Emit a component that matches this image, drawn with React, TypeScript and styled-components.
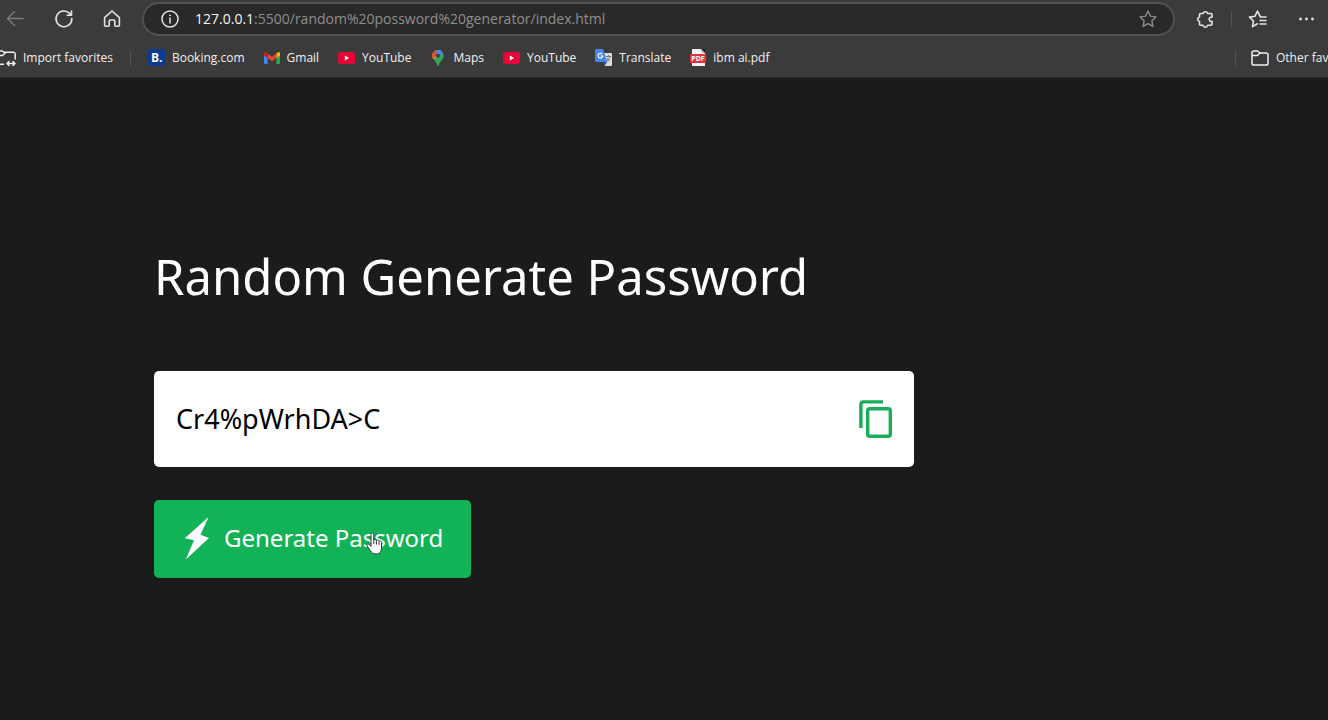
import React, { useState } from "react";
import styled, { createGlobalStyle } from "styled-components";

const GlobalStyle = createGlobalStyle`
  * { box-sizing: border-box; }
  body {
    margin: 0;
    background: #1b1b1b;
    color: #fff;
    font-family: "Noto Sans", "Open Sans", sans-serif;
  }
  button, input { font: inherit; }
`;

const Browser = styled.div`
  min-height: 100vh;
  display: flex;
  flex-direction: column;
  overflow: hidden;
`;

const Chrome = styled.header`
  background: #3b3b3b;
  border-bottom: 1px solid #282828;
`;

const Toolbar = styled.div`
  display: flex;
  align-items: center;
  height: 38px;
  padding-right: 10px;
`;

const NavGroup = styled.nav`
  display: flex;
  align-items: center;
  gap: 24px;
  padding: 0 18px 0 4px;
`;

const IconButton = styled.button<{ $color?: string }>`
  display: grid;
  place-items: center;
  width: 24px;
  height: 24px;
  padding: 0;
  border: 0;
  background: none;
  color: ${(p) => p.$color ?? "#e4e4e4"};
`;

const AddressBar = styled.div`
  flex: 1;
  display: flex;
  align-items: center;
  height: 34px;
  padding: 0 13px 0 16px;
  border: 2px solid #505050;
  border-radius: 17px;
  background: #292929;
`;

const Address = styled.p`
  flex: 1;
  margin: 0 0 0 15px;
  font-family: "Open Sans", sans-serif;
  font-size: 14px;
  line-height: 20px;
  color: #8f8f8f;
  white-space: nowrap;
`;

const Host = styled.span`
  font-weight: 500;
  color: #f5f5f5;
`;

const Divider = styled.span`
  flex: none;
  width: 1px;
  height: 16px;
  background: #525252;
`;

const ToolGroup = styled.div`
  display: flex;
  align-items: center;
  gap: 24px;
  padding-left: 18px;

  ${Divider} { margin: 0 -10px; }
`;

const BookmarkBar = styled.div`
  display: flex;
  align-items: center;
  height: 39px;
`;

const BookmarkList = styled.nav`
  flex: 1;
  display: flex;
  align-items: center;
  gap: 19px;

  ${Divider} { margin: 0 -2px; }
`;

const Bookmark = styled.a`
  display: flex;
  align-items: center;
  gap: 7px;
  font-family: "Open Sans", sans-serif;
  font-size: 12px;
  font-weight: 500;
  line-height: 20px;
  color: #f0f0f0;
  text-decoration: none;
  white-space: nowrap;

  svg { flex: none; }
`;

const OtherBookmarks = styled.div`
  display: flex;
  align-items: center;
  gap: 15px;
  width: 93px;
`;

const Page = styled.main`
  width: 100%;
  max-width: 1068px;
  padding: 166px 154px 40px;
`;

const Title = styled.h1`
  margin: 0;
  font-size: 49px;
  font-weight: 400;
  line-height: 64px;
  white-space: nowrap;
`;

const Field = styled.div`
  display: flex;
  align-items: center;
  height: 96px;
  margin-top: 63px;
  padding: 0 22px;
  border-radius: 5px;
  background: #fff;
`;

const PasswordInput = styled.input`
  flex: 1;
  min-width: 0;
  padding: 0;
  border: 0;
  outline: 0;
  background: none;
  color: #000;
  font-size: 27px;
  line-height: 36px;
`;

const CopyButton = styled.button`
  display: block;
  padding: 0;
  border: 0;
  background: none;
  color: #16ae5a;

  svg { display: block; }
`;

const GenerateButton = styled.button`
  position: relative;
  display: flex;
  align-items: center;
  gap: 14px;
  height: 78px;
  margin-top: 33px;
  padding: 0 28px 2px 30px;
  border: 0;
  border-radius: 5px;
  background: #12b357;
  color: #fff;
  font-size: 24px;
  line-height: 36px;
  white-space: nowrap;
`;

const Pointer = styled.svg`
  position: absolute;
  left: 211px;
  top: 32px;
`;

const line = {
  fill: "none",
  stroke: "currentColor",
  strokeWidth: 1.4,
  strokeLinecap: "round" as const,
  strokeLinejoin: "round" as const,
};

const BackIcon = () => (
  <svg width="20" height="20" viewBox="0 0 20 20" {...line}>
    <path d="M17 9.500H2M8.500 2.500 1.500 9.500l7 7" />
  </svg>
);

const ReloadIcon = () => (
  <svg width="20" height="20" viewBox="0 0 20 20" {...line} strokeWidth={1.6}>
    <path d="M17.800 9.500a7.900 7.900 0 1 1-2.200-5.100l1.700 1.800M17.500 2v4.300h-4.300" />
  </svg>
);

const HomeIcon = () => (
  <svg width="20" height="20" viewBox="0 0 20 20" {...line} strokeWidth={1.6}>
    <path d="M2.600 8.700 10 2l7.400 6.700V16a1.300 1.300 0 0 1-1.300 1.300h-2.300a1 1 0 0 1-1-1V12a1 1 0 0 0-1-1H8.200a1 1 0 0 0-1 1v4.300a1 1 0 0 1-1 1H3.900A1.300 1.300 0 0 1 2.600 16z" />
  </svg>
);

const InfoIcon = () => (
  <svg width="20" height="20" viewBox="0 0 20 20" {...line} stroke="#e4e4e4" strokeWidth={1.5}>
    <circle cx="10" cy="10" r="8" />
    <path d="M10 9v5" />
    <circle cx="10" cy="6.300" r=".5" fill="#e4e4e4" strokeWidth={0.8} />
  </svg>
);

const StarIcon = () => (
  <svg width="20" height="20" viewBox="0 0 20 20" {...line}>
    <path d="m10 2 2.400 5.100 5.500.8-4 3.900 1 5.600-4.900-2.700-4.900 2.700 1-5.600-4-3.900 5.500-.8z" />
  </svg>
);

const PuzzleIcon = () => (
  <svg width="20" height="20" viewBox="0 0 20 20" {...line} strokeWidth={1.6}>
    <path d="M5.500 4.500h2.600a2.300 2.300 0 0 1 4.500 0h3.400a1 1 0 0 1 1 1V8.200a2.200 2.200 0 1 0 0 4.200v2.900a1 1 0 0 1-1 1h-3.400a2.300 2.300 0 0 1-4.500 0H5.500a1 1 0 0 1-1-1v-2.800a2.300 2.300 0 0 1 0-4.500V5.500a1 1 0 0 1 1-1z" />
  </svg>
);

const FavoritesIcon = () => (
  <svg width="20" height="20" viewBox="0 0 20 20" {...line} strokeWidth={1.6}>
    <path d="M18 8h-5.500L9.400 2.200 6.900 7.300l-5.400.8 4 3.900-1 5.600 4.900-2.800M12 11.500h6M12 15h6" />
  </svg>
);

const MoreIcon = () => (
  <svg width="20" height="20" viewBox="0 0 20 20" fill="currentColor">
    <circle cx="4.500" cy="10" r="1.400" />
    <circle cx="10.500" cy="10" r="1.400" />
    <circle cx="16.500" cy="10" r="1.400" />
  </svg>
);

const ImportIcon = () => (
  <svg width="16" height="18" viewBox="4 0 16 18" {...line} strokeWidth={1.5}>
    <path d="M0 4.500V2h6.500L9 4.300 6.500 6.500H0M9 3.300h8.500A1.800 1.800 0 0 1 19.200 5v5M0 15.300h7.500M11 14.500h8M13 12.500l-2 2 2 2M17 12.500l2 2-2 2" />
  </svg>
);

const FolderIcon = () => (
  <svg width="18" height="18" viewBox="0 0 18 18" {...line} strokeWidth={1.5}>
    <path d="M1 4a2 2 0 0 1 2-2h3.600L9 4h6.200A1.800 1.800 0 0 1 17 5.800v8.400a1.800 1.800 0 0 1-1.800 1.800H2.800A1.800 1.800 0 0 1 1 14.200zM1 6.500h5.500L9 4" />
  </svg>
);

const BookingIcon = () => (
  <svg width="17" height="17" viewBox="0 0 17 17">
    <rect width="17" height="17" rx="2" fill="#0b3a8f" />
    <text x="3" y="13" fill="#fff" fontFamily="Open Sans, sans-serif" fontWeight="700" fontSize="12">B.</text>
  </svg>
);

const GmailIcon = () => (
  <svg width="16" height="16" viewBox="0 0 16 16">
    <path fill="#4285f4" d="M0 4.500 3.600 7v7H1.200A1.200 1.200 0 0 1 0 12.800z" />
    <path fill="#34a853" d="M12.400 7 16 4.500v8.300a1.200 1.200 0 0 1-1.200 1.200h-2.400z" />
    <path fill="#fbbc04" d="M12.400 3.500 14 2.300c1-.7 2 0 2 1.200v2L12.400 8z" />
    <path fill="#ea4335" d="M3.600 3.600 8 6.800l4.400-3.200V8L8 11.200 3.600 8z" />
    <path fill="#c5221f" d="M0 3.500c0-1.200 1-1.900 2-1.200l1.600 1.300V8L0 5.500z" />
  </svg>
);

const YouTubeIcon = () => (
  <svg width="17" height="16" viewBox="0 0 17 16">
    <rect y="2" width="17" height="12" rx="3" fill="#e80536" />
    <path d="m6.800 5.500 4.400 2.500-4.400 2.500z" fill="#fff" />
  </svg>
);

const MapsIcon = () => (
  <svg width="16" height="16" viewBox="0 0 14 16">
    <defs>
      <clipPath id="pin">
        <path d="M7 0a5.700 5.700 0 0 1 5.700 5.700c0 3.700-3.900 5-4.900 9.500-.2 1-1.400 1-1.600 0-1-4.500-4.900-5.800-4.900-9.500A5.700 5.700 0 0 1 7 0z" />
      </clipPath>
    </defs>
    <g clipPath="url(#pin)">
      <path fill="#34a853" d="M0 0h14v16H0z" />
      <path fill="#fbbc04" d="M0 12 12 0H0z" />
      <path fill="#4285f4" d="M4 0h10v2L7 8z" />
      <path fill="#ea4335" d="M0 0h3.500L7 4 2 9 0 7z" />
    </g>
    <circle cx="7" cy="5.700" r="2" fill="#3b3b3b" />
  </svg>
);

const TranslateIcon = () => (
  <svg width="17" height="17" viewBox="0 0 17 17">
    <path fill="#dcdcdc" d="M7 4h8.800A1.200 1.200 0 0 1 17 5.200v10.600a1.200 1.200 0 0 1-1.200 1.200H10z" />
    <path fill="#4b83e8" d="M1.200 0h7l4 13H1.200A1.200 1.200 0 0 1 0 11.800V1.200A1.200 1.200 0 0 1 1.200 0z" />
    <path fill="#2a56b8" d="M8.700 13h3.500L10 16.500z" />
    <path fill="none" stroke="#fff" strokeWidth="1.200" d="M7.200 5.100a2.400 2.400 0 1 0 .6 1.900H5.500" />
    <path fill="none" stroke="#6d7480" d="M11 7.500h5M13.500 6v1.500M15 7.500c-.4 2-1.500 3.500-3 4.500M12 9c.6 1.500 1.700 2.700 3 3.500" />
  </svg>
);

const PdfIcon = () => (
  <svg width="16" height="17" viewBox="0 0 16 17">
    <path fill="#f5f5f5" d="M2 0h9l4 4v13H2z" />
    <path fill="#222" d="M11 0h4v4h-4z" />
    <path fill="#c9c9c9" d="m11 0 4 4h-4z" />
    <rect y="5" width="16" height="9" rx="1" fill="#e3303f" />
    <text x="8" y="12" textAnchor="middle" fill="#fff" fontFamily="Open Sans, sans-serif" fontWeight="700" fontSize="7">PDF</text>
  </svg>
);

const CopyIcon = () => (
  <svg width="33" height="38" viewBox="0 0 33 38" fill="none" stroke="currentColor" strokeWidth="3.400">
    <path d="M1.900 28V4.200a2.300 2.300 0 0 1 2.300-2.300H24" />
    <rect x="8.700" y="8.700" width="22.600" height="27.600" rx="2" />
  </svg>
);

const BoltIcon = () => (
  <svg width="26" height="44" viewBox="0 0 26 44" fill="#fff">
    <path d="M24.500 1 .8 22.300l9.200 2L1.800 43.500 25 22.100l-8.500-3.300z" />
  </svg>
);

const bookmarks = [
  { label: "Booking.com", icon: <BookingIcon /> },
  { label: "Gmail", icon: <GmailIcon /> },
  { label: "YouTube", icon: <YouTubeIcon /> },
  { label: "Maps", icon: <MapsIcon /> },
  { label: "YouTube", icon: <YouTubeIcon /> },
  { label: "Translate", icon: <TranslateIcon /> },
  { label: "ibm ai.pdf", icon: <PdfIcon /> },
];

const LENGTH = 12;
const CHARS =
  "ABCDEFGHIJKLMNOPQRSTUVWXYZabcdefghijklmnopqrstuvwxyz0123456789@#$%^&*()_+~|}{[]></-=";

const createPassword = () =>
  Array.from({ length: LENGTH }, () => CHARS[Math.floor(Math.random() * CHARS.length)]).join("");

export default function App() {
  const [password, setPassword] = useState("Cr4%pWrhDA>C");

  return (
    <Browser>
      <GlobalStyle />
      <Chrome>
        <Toolbar>
          <NavGroup aria-label="Navigation">
            <IconButton aria-label="Back" $color="#7c7c7c"><BackIcon /></IconButton>
            <IconButton aria-label="Reload"><ReloadIcon /></IconButton>
            <IconButton aria-label="Home"><HomeIcon /></IconButton>
          </NavGroup>
          <AddressBar>
            <InfoIcon />
            <Address>
              <Host>127.0.0.1</Host>:5500/random%20possword%20generator/index.html
            </Address>
            <IconButton aria-label="Add to favorites" $color="#8c8c8c"><StarIcon /></IconButton>
          </AddressBar>
          <ToolGroup>
            <IconButton aria-label="Extensions"><PuzzleIcon /></IconButton>
            <Divider />
            <IconButton aria-label="Favorites"><FavoritesIcon /></IconButton>
            <IconButton aria-label="More"><MoreIcon /></IconButton>
          </ToolGroup>
        </Toolbar>
        <BookmarkBar>
          <BookmarkList aria-label="Favorites bar">
            <Bookmark href="#"><ImportIcon />Import favorites</Bookmark>
            <Divider />
            {bookmarks.map((b, i) => (
              <Bookmark key={i} href="#">{b.icon}{b.label}</Bookmark>
            ))}
          </BookmarkList>
          <OtherBookmarks>
            <Divider />
            <Bookmark href="#"><FolderIcon />Other fav</Bookmark>
          </OtherBookmarks>
        </BookmarkBar>
      </Chrome>
      <Page>
        <Title>Random Generate Password</Title>
        <Field>
          <PasswordInput aria-label="Password" readOnly value={password} />
          <CopyButton aria-label="Copy password" onClick={() => navigator.clipboard?.writeText(password)}>
            <CopyIcon />
          </CopyButton>
        </Field>
        <GenerateButton onClick={() => setPassword(createPassword())}>
          <BoltIcon />
          Generate Password
          <Pointer width="20" height="24" viewBox="0 0 20 24" aria-hidden="true">
            <path
              d="M6 2.500c0-2 2.800-2 2.800 0v5.600c.3-1 2.500-.9 2.600.5.500-1 2.500-.7 2.600.7.700-.9 2.500-.5 2.500 1.200v5.200c0 3.800-1.800 6.300-5.300 6.300-3 0-4.400-1.100-6-3.600L2 13.800c-1-1.500.8-2.700 2-1.500l2 2z"
              fill="#fff"
              stroke="#333"
              strokeWidth="1"
            />
            <path d="M8.800 8v4M11.400 9v3.500M14 9.800v3" stroke="#333" strokeWidth="1" />
          </Pointer>
        </GenerateButton>
      </Page>
    </Browser>
  );
}
